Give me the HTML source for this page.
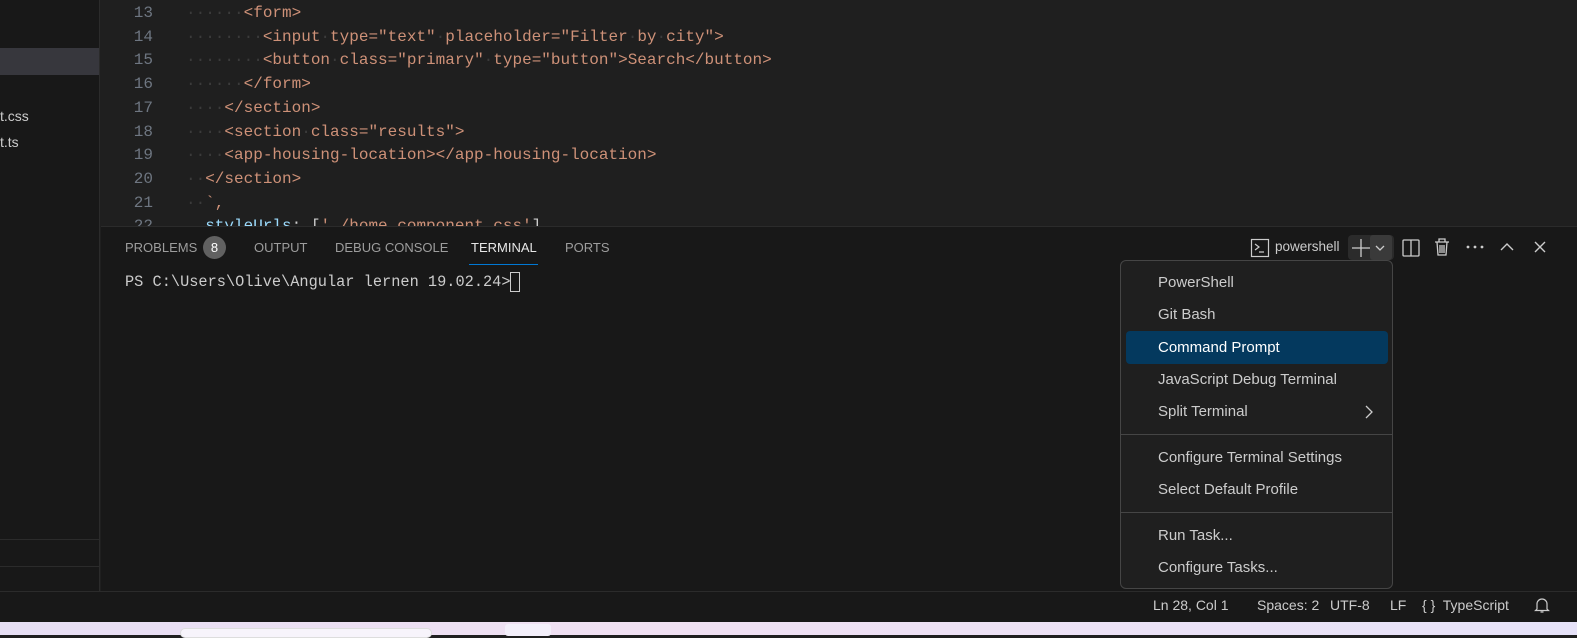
<!DOCTYPE html>
<html><head><meta charset="utf-8"><style>
*{margin:0;padding:0;box-sizing:border-box}
body{width:1577px;height:635px;overflow:hidden;background:#1f1f1f;position:relative;font-family:"Liberation Sans",sans-serif}
.abs{position:absolute}
.side{left:0;top:0;width:100px;height:592px;background:#181818;border-right:1px solid #2b2b2b}
.code{font-family:"Liberation Mono",monospace;font-size:16px;white-space:pre;color:#ce9178;line-height:23.7px}
.ln{color:#6e7681;text-align:right;width:40px;left:113px}
.dot{color:#3b3b3b}
.panel{left:101px;top:226px;width:1476px;height:366px;background:#181818;border-top:1px solid #2b2b2b}
.tab{top:240px;font-size:13px;color:#9d9d9d}
.menu{left:1120px;top:260px;width:273px;height:329px;background:#1f1f1f;border:1px solid #454545;border-radius:6px}
.mi{position:absolute;left:37px;font-size:15px;color:#cccccc}
.sep{position:absolute;left:0;width:271px;height:1px;background:#454545}
.st{top:597px;font-size:14px;color:#cccccc}
</style></head><body>
<div class="abs side">
 <div class="abs" style="left:0;top:48px;width:99px;height:27px;background:#37373d"></div>
 <div class="abs" style="left:0;top:108px;font-size:14px;color:#ccc">t.css</div>
 <div class="abs" style="left:0;top:134px;font-size:14px;color:#ccc">t.ts</div>
 <div class="abs" style="left:0;top:539px;width:99px;height:1px;background:#2b2b2b"></div>
 <div class="abs" style="left:0;top:566px;width:99px;height:1px;background:#2b2b2b"></div>
</div>
<div class="abs code ln" style="top:2px">13
14
15
16
17
18
19
20
21
22</div>
<div class="abs code" style="left:186px;top:2px"><span class="dot">······</span>&lt;form&gt;
<span class="dot">········</span>&lt;input<span class="dot">·</span>type="text"<span class="dot">·</span>placeholder="Filter<span class="dot">·</span>by<span class="dot">·</span>city"&gt;
<span class="dot">········</span>&lt;button<span class="dot">·</span>class="primary"<span class="dot">·</span>type="button"&gt;Search&lt;/button&gt;
<span class="dot">······</span>&lt;/form&gt;
<span class="dot">····</span>&lt;/section&gt;
<span class="dot">····</span>&lt;section<span class="dot">·</span>class="results"&gt;
<span class="dot">····</span>&lt;app-housing-location&gt;&lt;/app-housing-location&gt;
<span class="dot">··</span>&lt;/section&gt;
<span class="dot">··</span>`,
<span style="color:#9cdcfe">  styleUrls</span><span style="color:#ccc">: [</span>'./home.component.css'<span style="color:#ccc">]</span></div>
<div class="abs panel"></div>
<div class="abs tab" style="left:125px">PROBLEMS</div>
<div class="abs" style="left:203px;top:236px;width:23px;height:23px;border-radius:50%;background:#616161;color:#fff;font-size:13px;text-align:center;line-height:23px">8</div>
<div class="abs tab" style="left:254px">OUTPUT</div>
<div class="abs tab" style="left:335px">DEBUG CONSOLE</div>
<div class="abs tab" style="left:471px;color:#e7e7e7">TERMINAL</div>
<div class="abs" style="left:469px;top:264px;width:69px;height:1px;background:#0078d4"></div>
<div class="abs tab" style="left:565px">PORTS</div>
<div class="abs code" style="left:125px;top:271px;color:#cccccc;font-size:15.3px">PS C:\Users\Olive\Angular lernen 19.02.24&gt;</div>
<div class="abs" style="left:510px;top:272px;width:10px;height:20px;border:1px solid #ccc"></div>
<!-- toolbar -->
<svg class="abs" style="left:1250px;top:238px" width="20" height="20" viewBox="0 0 20 20" fill="none" stroke="#ccc" stroke-width="1.2"><rect x="1.5" y="1.5" width="17" height="17"/><path d="M5 6l4 3-4 3M9 14h5"/></svg>
<div class="abs" style="left:1275px;top:239px;font-size:13.5px;color:#ccc">powershell</div>
<div class="abs" style="left:1348px;top:235px;width:46px;height:25px;background:#2b2b2b;border-radius:4px"></div>
<div class="abs" style="left:1370px;top:235px;width:22px;height:25px;background:#3a3a3a;border-radius:3px"></div>
<svg class="abs" style="left:1350px;top:237px" width="44" height="22" fill="none" stroke="#ccc" stroke-width="1.3"><path d="M11 2v18M2 11h18"/><path d="M26 9l4 4 4-4"/></svg>
<svg class="abs" style="left:1401px;top:238px" width="20" height="20" fill="none" stroke="#ccc" stroke-width="1.3"><rect x="2" y="2" width="16" height="16" rx="1"/><path d="M10 2v16"/></svg>
<svg class="abs" style="left:1433px;top:237px" width="18" height="20" fill="none" stroke="#ccc" stroke-width="1.3"><path d="M2 5h14M6 5V2h6v3M4 5l1 13h8l1-13M7 8v8M9 8v8M11 8v8"/></svg>
<svg class="abs" style="left:1465px;top:244px" width="20" height="6" fill="#ccc"><circle cx="3" cy="3" r="1.4"/><circle cx="10" cy="3" r="1.4"/><circle cx="17" cy="3" r="1.4"/></svg>
<svg class="abs" style="left:1498px;top:238px" width="18" height="18" fill="none" stroke="#ccc" stroke-width="1.4"><path d="M3 12l6-6 6 6"/></svg>
<svg class="abs" style="left:1531px;top:238px" width="18" height="18" fill="none" stroke="#ccc" stroke-width="1.4"><path d="M4 4l10 10M14 4L4 14"/></svg>
<!-- menu -->
<div class="abs menu">
 <div class="mi" style="top:13px">PowerShell</div>
 <div class="mi" style="top:45px">Git Bash</div>
 <div style="position:absolute;left:5px;top:70px;width:262px;height:33px;background:#04395e;border-radius:4px"></div>
 <div class="mi" style="top:78px;color:#fff">Command Prompt</div>
 <div class="mi" style="top:110px">JavaScript Debug Terminal</div>
 <div class="mi" style="top:142px">Split Terminal</div>
 <svg style="position:absolute;left:242px;top:143px" width="12" height="16" fill="none" stroke="#ccc" stroke-width="1.3"><path d="M3 2l6 6-6 6"/></svg>
 <div class="sep" style="top:173px"></div>
 <div class="mi" style="top:188px">Configure Terminal Settings</div>
 <div class="mi" style="top:220px">Select Default Profile</div>
 <div class="sep" style="top:251px"></div>
 <div class="mi" style="top:266px">Run Task...</div>
 <div class="mi" style="top:298px">Configure Tasks...</div>
</div>
<!-- status -->
<div class="abs" style="left:0;top:591px;width:1577px;height:31px;background:#181818;border-top:1px solid #2b2b2b"></div>
<div class="abs st" style="left:1153px">Ln 28, Col 1</div>
<div class="abs st" style="left:1257px">Spaces: 2</div>
<div class="abs st" style="left:1330px">UTF-8</div>
<div class="abs st" style="left:1390px">LF</div>
<div class="abs st" style="left:1422px">{ }&nbsp; TypeScript</div>
<svg class="abs" style="left:1534px;top:596px" width="16" height="18" fill="none" stroke="#ccc" stroke-width="1.2"><path d="M3 13V8a5 5 0 0 1 10 0v5l1.5 1.5h-13zM6.5 16h3"/></svg>
<div class="abs" style="left:0;top:622px;width:1577px;height:13px;background:linear-gradient(90deg,#e6def3,#f0e0f2 40%,#e6e2f8)"></div>
<div class="abs" style="left:180px;top:628px;width:252px;height:10px;background:#f7f4fb;border-radius:6px;border:1px solid #ddd"></div>
<div class="abs" style="left:505px;top:624px;width:46px;height:12px;background:#f3effa;border-radius:3px"></div>
</body></html>
